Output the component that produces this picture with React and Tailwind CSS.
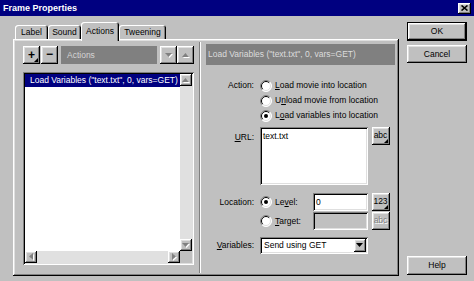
import React from 'react';

const raised =
  'shadow-[inset_-1px_-1px_0_#000,inset_1px_1px_0_#fff,inset_-2px_-2px_0_#808080,inset_2px_2px_0_#dfdfdf]';
const sunken =
  'shadow-[inset_1px_1px_0_#808080,inset_-1px_-1px_0_#fff,inset_2px_2px_0_#000,inset_-2px_-2px_0_#dfdfdf]';
const tabEdge = 'shadow-[inset_1px_1px_0_#fff,inset_-1px_0_0_#000,inset_-2px_0_0_#808080]';

const Btn = ({ children, className = '' }) => (
  <div className={`relative bg-[#c0c0c0] ${raised} flex items-center justify-center ${className}`}>
    {children}
  </div>
);

const Corner = () => (
  <svg width="4" height="4" viewBox="0 0 4 4" className="absolute right-[2px] bottom-[2px]">
    <path d="M4 0V4H0z" fill="#000" />
  </svg>
);

// small triangle, optionally greyed out with a white emboss
const Arrow = ({ dir = 'down', disabled = false }) => {
  const shapes = {
    down: '0,0 7,0 3.5,4',
    up: '0,4 7,4 3.5,0',
    left: '4,0 4,7 0,3.5',
    right: '0,0 0,7 4,3.5',
  };
  const vertical = dir === 'down' || dir === 'up';
  const w = vertical ? 8 : 5;
  const h = vertical ? 5 : 8;
  return (
    <svg width={w} height={h} viewBox={`0 0 ${w} ${h}`}>
      {disabled && <polygon points={shapes[dir]} fill="#fff" transform="translate(1 1)" />}
      <polygon points={shapes[dir]} fill={disabled ? '#808080' : '#000'} />
    </svg>
  );
};

const Radio = ({ checked }) => (
  <svg width="12" height="12" viewBox="0 0 12 12" className="shrink-0">
    <circle cx="6" cy="6" r="5.5" fill="#fff" />
    <path d="M2.1 9.9A5.5 5.5 0 0 1 9.9 2.1" fill="none" stroke="#808080" />
    <path d="M9.9 2.1A5.5 5.5 0 0 1 2.1 9.9" fill="none" stroke="#fff" />
    <path d="M2.8 9.2A4.5 4.5 0 0 1 9.2 2.8" fill="none" stroke="#000" />
    <path d="M9.2 2.8A4.5 4.5 0 0 1 2.8 9.2" fill="none" stroke="#dfdfdf" />
    {checked && <circle cx="6" cy="6" r="2" fill="#000" />}
  </svg>
);

const U = ({ children }) => <span className="underline underline-offset-[1px]">{children}</span>;

const Tab = ({ label, width, active }) =>
  active ? (
    <div
      className={`relative z-10 h-[19px] mb-[-2px] bg-[#c0c0c0] rounded-t-[3px] ${tabEdge} flex justify-center pt-[5px] ${width}`}
    >
      {label}
    </div>
  ) : (
    <div className={`h-[14px] rounded-t-[3px] ${tabEdge} flex items-center justify-center ${width}`}>{label}</div>
  );

const FieldLabel = ({ children, className = '' }) => (
  <div className={`w-[48px] shrink-0 flex justify-end ${className}`}>{children}</div>
);

const ActionsPage = () => (
  <div className={`h-[237px] w-[386px] ${raised} flex pl-[10px] pt-[3px] pb-[3px]`}>
    {/* action list */}
    <div className="w-[171px] flex flex-col pt-[4px]">
      <div className="flex h-[18px]">
        <Btn className="w-[17px] h-[18px] font-bold text-[12px]">
          <span className="mt-[-1px]">+</span>
          <Corner />
        </Btn>
        <Btn className="w-[17px] h-[18px] ml-[1px] font-bold text-[12px]">
          <span className="mt-[-2px]">−</span>
        </Btn>
        <div className="w-[96px] ml-[3px] bg-[#808080] text-[#d4d4d4] flex items-center pl-[6px]">Actions</div>
        <Btn className="w-[17px] h-[18px] ml-[3px]">
          <Arrow dir="down" disabled />
        </Btn>
        <Btn className="w-[17px] h-[18px]">
          <Arrow dir="up" disabled />
        </Btn>
      </div>

      <div className={`mt-[8px] h-[193px] bg-white ${sunken} p-[2px] flex flex-col`}>
        <div className="flex-1 flex">
          <div className="flex-1">
            <div className="h-[13px] bg-[#000080] text-white flex items-center pl-[5px] whitespace-nowrap">
              Load Variables ("text.txt", 0, vars=GET)
            </div>
          </div>
          <div className="w-[12px] bg-[#e0e0e0] flex flex-col justify-between">
            <Btn className="h-[12px]">
              <Arrow dir="up" disabled />
            </Btn>
            <Btn className="h-[12px]">
              <Arrow dir="down" disabled />
            </Btn>
          </div>
        </div>
        <div className="h-[12px] flex">
          <div className="flex-1 bg-[#e0e0e0] flex justify-between">
            <Btn className="w-[12px]">
              <Arrow dir="left" disabled />
            </Btn>
            <Btn className="w-[12px]">
              <Arrow dir="right" disabled />
            </Btn>
          </div>
          <div className="w-[12px] bg-[#c0c0c0]" />
        </div>
      </div>
    </div>

    <div className="ml-[5px] w-[2px] border-l border-l-[#808080] border-r border-r-white" />

    {/* action parameters */}
    <div className="ml-[5px] w-[189px] flex flex-col pt-[2px]">
      <div className="h-[21px] bg-[#808080] text-[#dcdcdc] flex items-center pl-[2px] whitespace-nowrap">
        Load Variables ("text.txt", 0, vars=GET)
      </div>

      <div className="flex mt-[13px]">
        <FieldLabel className="h-[15px] items-center">Action:</FieldLabel>
        <div className="ml-[6px] flex flex-col">
          <div className="h-[15px] flex items-center">
            <Radio />
            <span className="ml-[3px]">
              <U>L</U>oad movie into location
            </span>
          </div>
          <div className="h-[15px] flex items-center">
            <Radio />
            <span className="ml-[3px]">
              U<U>n</U>load movie from location
            </span>
          </div>
          <div className="h-[15px] flex items-center">
            <Radio checked />
            <span className="ml-[3px]">
              L<U>o</U>ad variables into location
            </span>
          </div>
        </div>
      </div>

      <div className="flex mt-[4px]">
        <FieldLabel className="pt-[6px]">
          <span>
            <U>U</U>RL:
          </span>
        </FieldLabel>
        <div className={`ml-[6px] w-[108px] h-[58px] bg-white ${sunken} pt-[5px] pl-[3px]`}>text.txt</div>
        <Btn className="ml-[4px] w-[18px] h-[18px] pb-[2px]">
          <span className="mr-[1px]">abc</span>
          <Corner />
        </Btn>
      </div>

      <div className="flex mt-[8px]">
        <FieldLabel className="h-[18px] items-center">Location:</FieldLabel>
        <div className="ml-[6px] flex flex-col">
          <div className="flex h-[18px]">
            <div className="w-[53px] flex items-center">
              <Radio checked />
              <span className="ml-[3px]">
                Le<U>v</U>el:
              </span>
            </div>
            <div className={`w-[55px] bg-white ${sunken} pt-[5px] pl-[3px]`}>0</div>
            <Btn className="ml-[4px] w-[18px] pb-[2px]">
              <span className="mr-[1px]">123</span>
              <Corner />
            </Btn>
          </div>
          <div className="flex h-[18px] mt-[1px]">
            <div className="w-[53px] flex items-center">
              <Radio />
              <span className="ml-[3px]">
                <U>T</U>arget:
              </span>
            </div>
            <div className={`w-[55px] bg-[#c0c0c0] ${sunken}`} />
            <Btn className="ml-[4px] w-[18px] pb-[2px] text-[#808080] [text-shadow:1px_1px_0_#fff]">
              <span className="mr-[1px]">abc</span>
            </Btn>
          </div>
        </div>
      </div>

      <div className="flex mt-[7px]">
        <FieldLabel className="h-[17px] items-center">
          <span>
            <U>V</U>ariables:
          </span>
        </FieldLabel>
        <div className={`ml-[6px] w-[108px] h-[17px] bg-white ${sunken} p-[2px] flex`}>
          <div className="flex-1 flex items-center pl-[2px]">Send using GET</div>
          <Btn className="w-[12px]">
            <Arrow dir="down" />
          </Btn>
        </div>
      </div>
    </div>
  </div>
);

export default function App() {
  return (
    <div className="w-[474px] h-[281px] overflow-hidden bg-[#c0c0c0] text-black text-[8.5px] leading-none font-['Liberation_Sans',Arial,sans-serif]">
      <div className="h-[16px] bg-[#000080] flex items-center justify-between pl-[3px] pr-[3px]">
        <span className="text-white font-bold text-[9px]">Frame Properties</span>
        <Btn className="w-[13px] h-[11px]">
          <svg width="7" height="6" viewBox="0 0 7 6">
            <path d="M0.5 0.5L6.5 5.5M6.5 0.5L0.5 5.5" stroke="#000" strokeWidth="1.6" />
          </svg>
        </Btn>
      </div>

      <div className="flex pl-[13px] pt-[6px] h-[265px]">
        <div className="w-[386px] flex flex-col">
          <div className="relative z-10 flex items-end pl-[2px] h-[17px]">
            <Tab label="Label" width="w-[33px]" />
            <Tab label="Sound" width="w-[33px]" />
            <Tab label="Actions" width="w-[38px]" active />
            <Tab label="Tweening" width="w-[47px]" />
          </div>
          <ActionsPage />
        </div>

        <div className="ml-[8px] w-[60px] flex flex-col pb-[6px]">
          <div className="h-[19px] border border-black">
            <Btn className="h-full">OK</Btn>
          </div>
          <Btn className="h-[18px] mt-[4px]">Cancel</Btn>
          <Btn className="h-[19px] mt-auto">Help</Btn>
        </div>
      </div>
    </div>
  );
}
